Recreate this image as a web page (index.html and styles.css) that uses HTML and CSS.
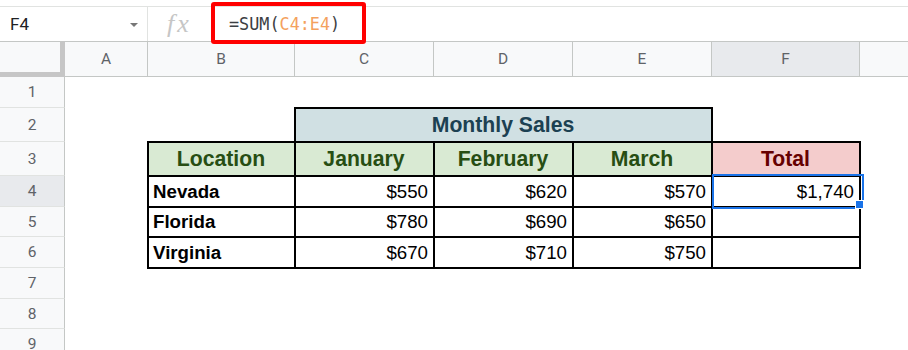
FILE: index.html
```html
<!DOCTYPE html>
<html lang="en">
<head>
<meta charset="utf-8">
<title>Monthly Sales</title>
<link rel="stylesheet" href="styles.css">
</head>
<body>
<div class="app">
  <div class="fbar">
    <div class="namebox"><span class="ref">F4</span><span class="caret"></span></div>
    <div class="fx">fx</div>
    <div class="formula">=SUM(<span class="rng">C4:E4</span>)</div>
    <div class="callout"></div>
  </div>
  <div class="sheet">
    <div class="corner"></div>
    <div class="ch">A</div><div class="ch">B</div><div class="ch">C</div><div class="ch">D</div><div class="ch">E</div><div class="ch sel">F</div><div class="ch last"></div>

    <div class="rh">1</div><div></div><div></div><div></div><div></div><div></div><div></div><div></div>

    <div class="rh">2</div><div></div><div></div><div class="t title">Monthly Sales</div><div></div><div></div>

    <div class="rh">3</div><div></div>
    <div class="t hd">Location</div><div class="t hd">January</div><div class="t hd">February</div><div class="t hd">March</div><div class="t hd tot">Total</div><div></div>

    <div class="rh sel">4</div><div></div>
    <div class="t loc">Nevada</div><div class="t num">$550</div><div class="t num">$620</div><div class="t num">$570</div><div class="t num selcell">$1,740<span class="handle"></span></div><div></div>

    <div class="rh">5</div><div></div>
    <div class="t loc">Florida</div><div class="t num">$780</div><div class="t num">$690</div><div class="t num">$650</div><div class="t num"></div><div></div>

    <div class="rh">6</div><div></div>
    <div class="t loc">Virginia</div><div class="t num">$670</div><div class="t num">$710</div><div class="t num">$750</div><div class="t num"></div><div></div>

    <div class="rh">7</div><div></div><div></div><div></div><div></div><div></div><div></div><div></div>
    <div class="rh">8</div><div></div><div></div><div></div><div></div><div></div><div></div><div></div>
    <div class="rh">9</div><div></div><div></div><div></div><div></div><div></div><div></div><div></div>
  </div>
</div>
</body>
</html>
```
FILE: styles.css
```css
* { box-sizing: border-box; margin: 0; padding: 0; }
html, body { background: #fff; }
body {
  margin: 0;
  width: 908px;
  height: 350px;
  overflow: hidden;
  font-family: "Liberation Sans", Arial, sans-serif;
}
.app { padding-top: 6px; }

/* formula bar */
.fbar {
  position: relative;
  display: flex;
  height: 35px;
  border-top: 1px solid #e1e3e1;
}
.namebox {
  width: 148px;
  border-right: 1px solid #e1e3e1;
  display: flex;
  align-items: center;
  justify-content: space-between;
  padding: 0 9px 0 10px;
  font-family: Roboto, "Liberation Sans", sans-serif;
  font-size: 17px;
  color: #202124;
}
.caret {
  width: 0;
  height: 0;
  border-left: 4px solid transparent;
  border-right: 4px solid transparent;
  border-top: 4px solid #777;
  margin-top: 1px;
}
.fx {
  width: 81px;
  padding-left: 19px;
  display: flex;
  align-items: center;
  font-family: "Liberation Serif", serif;
  font-style: italic;
  font-size: 26px;
  letter-spacing: 3px;
  color: #c6c6c6;
}
.formula {
  display: flex;
  align-items: center;
  font-family: "DejaVu Sans Mono", monospace;
  font-size: 16.8px;
  color: #3c4043;
  white-space: pre;
}
.rng { color: #f4a15d; }
.callout {
  position: absolute;
  left: 211px;
  top: -5px;
  width: 155px;
  height: 42px;
  border: 4px solid #f00;
  border-radius: 3px;
}

/* sheet grid */
.sheet {
  display: grid;
  grid-template-columns: 65px 83px 147px 139px 139px 139px 148px 1fr;
  grid-template-rows: 36px 31px 34px 34px 31px 30px 31px 31px 30px 30px;
}
.corner {
  background: #f8f9fa;
  border-top: 1px solid #c4c7c5;
  border-right: 5px solid #c6c6c6;
  border-bottom: 5px solid #c6c6c6;
}
.ch {
  background: #f8f9fa;
  border-top: 1px solid #c4c7c5;
  border-bottom: 1px solid #c4c7c5;
  border-right: 1px solid #c4c7c5;
  display: flex;
  align-items: center;
  justify-content: center;
  font-family: Roboto, "Liberation Sans", sans-serif;
  font-size: 15.5px;
  color: #5f6368;
}
.ch.last { border-right: none; }
.ch.sel, .rh.sel { background: #e8eaed; }
.rh {
  background: #f8f9fa;
  border-right: 1px solid #c4c7c5;
  border-bottom: 1px solid #e1e3e1;
  display: flex;
  align-items: center;
  justify-content: center;
  font-family: Roboto, "Liberation Sans", sans-serif;
  font-size: 15.5px;
  color: #5f6368;
}

/* table cells */
.t {
  outline: 2px solid #000;
  outline-offset: -1px;
  display: flex;
  align-items: center;
  padding: 0 6px 0 5px;
  font-size: 18.7px;
  color: #000;
  white-space: nowrap;
}
.title {
  grid-column: span 3;
  background: #d0e0e3;
  color: #1c4152;
  font-weight: bold;
  font-size: 21.2px;
  justify-content: center;
}
.hd {
  background: #d9ead3;
  color: #274e13;
  font-weight: bold;
  font-size: 21.2px;
  justify-content: center;
}
.hd.tot {
  background: #f4cccc;
  color: #660000;
}
.loc { font-weight: bold; }
.num { justify-content: flex-end; }
.selcell { position: relative; }
.selcell::after {
  content: "";
  position: absolute;
  left: 0;
  top: -2px;
  width: 148px;
  height: 31px;
  border: 2px solid #1a73e8;
  z-index: 2;
}
.handle {
  position: absolute;
  left: 143px;
  top: 24px;
  width: 9px;
  height: 9px;
  background: #1a73e8;
  border: 1px solid #fff;
  z-index: 3;
}
```
